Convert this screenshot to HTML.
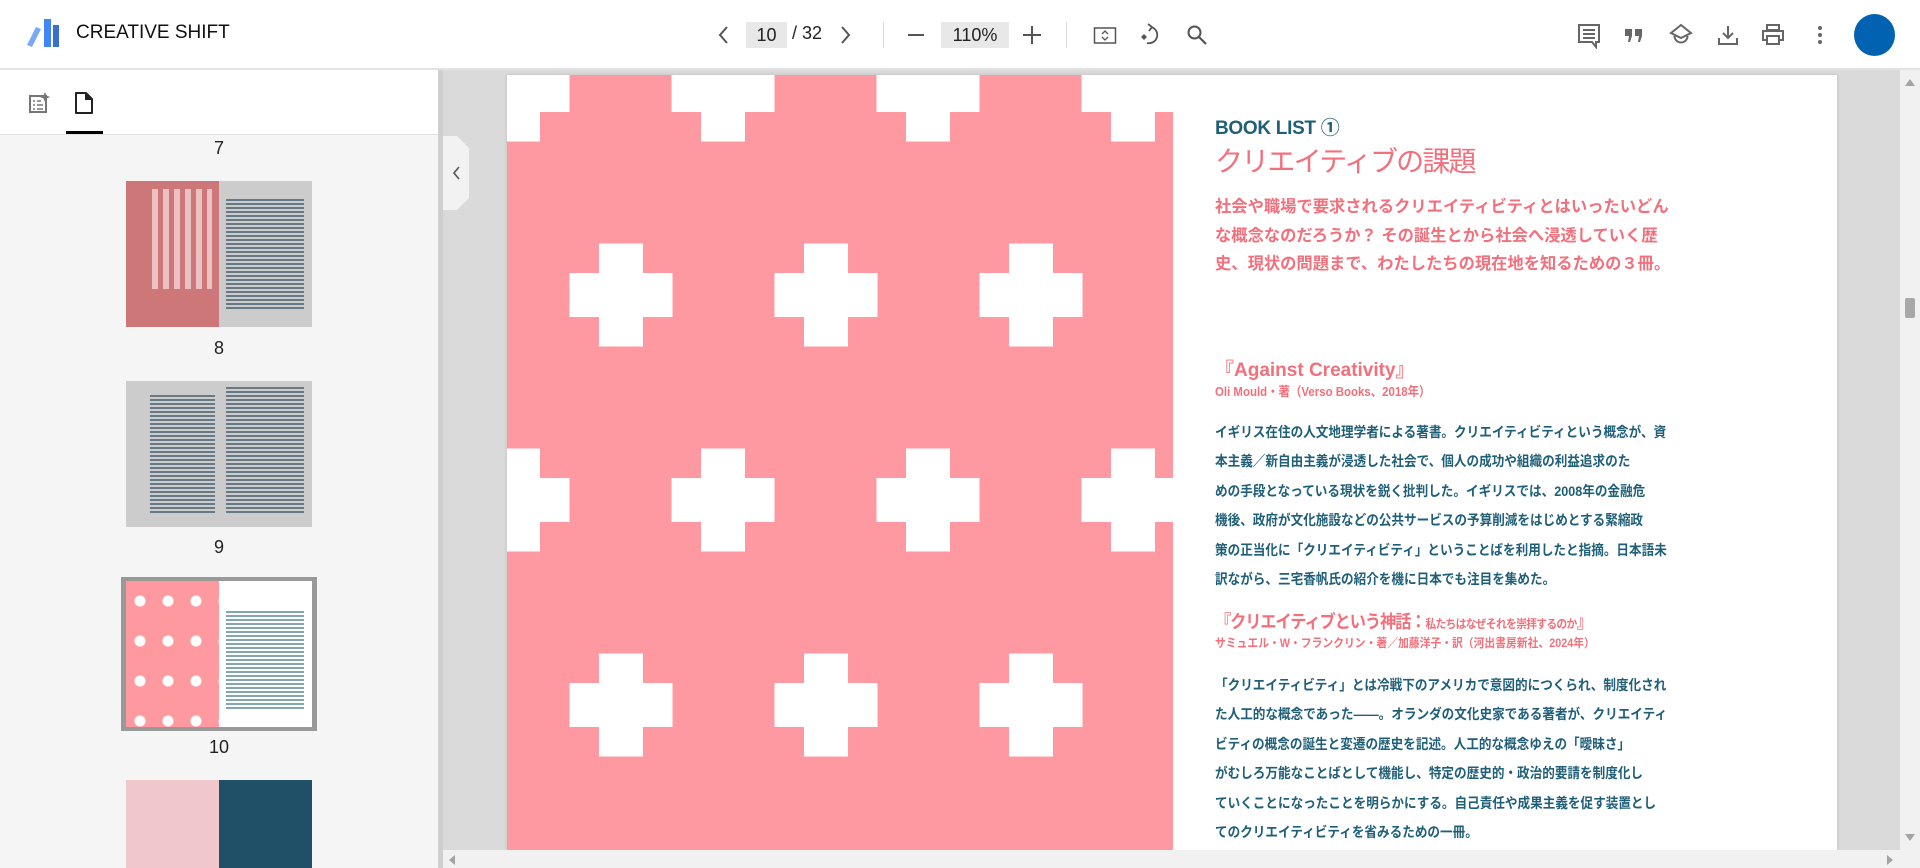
<!DOCTYPE html>
<html><head><meta charset="utf-8"><style>
*{margin:0;padding:0;box-sizing:border-box}
html{width:1920px;height:868px;overflow:hidden}
body{width:1920px;height:868px;overflow:hidden;background:#dadada;font-family:"Liberation Sans","Noto Sans CJK JP",sans-serif;position:relative}
.abs{position:absolute}
#top{left:0;top:0;width:1920px;height:70px;background:#fff;border-bottom:2px solid #e3e3e3;z-index:3}
.ic{position:absolute;top:23px}
#side{left:0;top:70px;width:438px;height:798px;background:#f5f5f5;overflow:hidden}
#tabs{left:0;top:0;width:438px;height:65px;background:#fff;border-bottom:1px solid #e2e2e2}
.num{position:absolute;width:438px;text-align:center;font-size:18px;color:#222}
.th{position:absolute;left:126px;width:186px;height:146px}
.pink{color:#f2707c}.teal{color:#1f5f78}
</style></head><body>
<div id="top" class="abs">
 <svg class="abs" style="left:24px;top:16px" width="40" height="36" viewBox="0 0 40 36"><path d="M3 29 L12 11 L17 13 L8 31Z" fill="#7aa7f7"/><rect x="20" y="3" width="7" height="28" fill="#4285f4"/><rect x="29" y="9" width="6" height="22" fill="#3a6fca"/></svg>
 <div class="abs" style="left:76px;top:22px;font-size:19px;color:#111">CREATIVE SHIFT</div>
 <svg class="ic" style="left:714px" width="20" height="24" viewBox="0 0 20 24"><path d="M13 4 L6 12 L13 20" stroke="#555" stroke-width="2" fill="none"/></svg>
 <div class="abs" style="left:746px;top:22px;width:41px;height:26px;background:#e8e8e8;font-size:18px;text-align:center;line-height:26px;color:#222">10</div>
 <div class="abs" style="left:792px;top:23px;font-size:18px;color:#222">/ 32</div>
 <svg class="ic" style="left:835px" width="20" height="24" viewBox="0 0 20 24"><path d="M7 4 L14 12 L7 20" stroke="#555" stroke-width="2" fill="none"/></svg>
 <div class="abs" style="left:883px;top:22px;width:1px;height:26px;background:#ddd"></div>
 <svg class="ic" style="left:906px" width="20" height="24"><path d="M2 12 H18" stroke="#555" stroke-width="2"/></svg>
 <div class="abs" style="left:941px;top:22px;width:68px;height:26px;background:#e8e8e8;font-size:18px;text-align:center;line-height:26px;color:#222">110%</div>
 <svg class="ic" style="left:1021px" width="22" height="24"><path d="M2 12 H20 M11 3 V21" stroke="#555" stroke-width="2"/></svg>
 <div class="abs" style="left:1066px;top:22px;width:1px;height:26px;background:#ddd"></div>
 <svg class="ic" style="left:1093px" width="24" height="24"><rect x="1.5" y="5" width="21" height="15" stroke="#555" stroke-width="1.5" fill="none"/><path d="M9 11 L12 8 L15 11 M9 14 L12 17 L15 14" stroke="#555" stroke-width="1.3" fill="none"/></svg>
 <svg class="ic" style="left:1139px" width="24" height="26"><path d="M12 4 A8 8 0 1 1 8 20" stroke="#555" stroke-width="1.8" fill="none"/><path d="M9 1 L13 4 L10 8" stroke="#555" stroke-width="1.8" fill="none"/><path d="M5 11 L8 14 L5 17 L2 14Z" fill="#555"/></svg>
 <svg class="ic" style="left:1185px" width="24" height="24"><circle cx="9.5" cy="9.5" r="6" stroke="#555" stroke-width="2" fill="none"/><path d="M14 14 L21 21" stroke="#555" stroke-width="2.2"/></svg>
 <svg class="ic" style="left:1577px" width="24" height="26"><path d="M2 2 H22 V19 H19 V24 L15 19 H2Z" stroke="#666" stroke-width="2" fill="none"/><path d="M6 7 H18 M6 11 H18 M6 15 H18" stroke="#666" stroke-width="2"/></svg>
 <svg class="ic" style="left:1622px" width="24" height="24"><path d="M3 6 H10 V13 L8 19 H6 L7 13 H3Z M13 6 H20 V13 L18 19 H16 L17 13 H13Z" fill="#666"/></svg>
 <svg class="ic" style="left:1669px" width="24" height="26"><path d="M12 2 L22 10 L12 15 L2 10Z" stroke="#666" stroke-width="2" fill="none"/><path d="M5.5 13 A6.5 6.5 0 1 0 18.5 13" stroke="#666" stroke-width="2" fill="none"/></svg>
 <svg class="ic" style="left:1716px" width="24" height="24"><path d="M12 3 V15 M7 10 L12 15 L17 10 M3 15 V21 H21 V15" stroke="#666" stroke-width="2" fill="none"/></svg>
 <svg class="ic" style="left:1761px" width="24" height="24"><rect x="6" y="2" width="12" height="5" stroke="#666" stroke-width="2" fill="none"/><path d="M6 17 H2 V8 H22 V17 H18" stroke="#666" stroke-width="2" fill="none"/><rect x="6" y="13" width="12" height="8" stroke="#666" stroke-width="2" fill="none"/></svg>
 <svg class="ic" style="left:1815px" width="10" height="24"><circle cx="5" cy="5" r="2" fill="#666"/><circle cx="5" cy="12" r="2" fill="#666"/><circle cx="5" cy="19" r="2" fill="#666"/></svg>
 <div class="abs" style="left:1854px;top:14px;width:41px;height:42px;border-radius:50%;background:#0062b0"></div>
</div>

<div id="side" class="abs">
 <div id="tabs" class="abs">
  <svg class="abs" style="left:28px;top:22px" width="22" height="22"><rect x="2" y="4" width="16" height="16" stroke="#777" stroke-width="2" fill="none"/><path d="M5 9 H7 M9 9 H13 M5 13 H7 M9 13 H15 M5 17 H7 M9 17 H15" stroke="#777" stroke-width="1.5"/><path d="M17 0 L18.5 3.5 L22 5 L18.5 6.5 L17 10 L15.5 6.5 L12 5 L15.5 3.5Z" fill="#777"/></svg>
  <svg class="abs" style="left:74px;top:21px" width="20" height="24"><path d="M2 2 H12 L18 8 V22 H2Z" stroke="#222" stroke-width="2" fill="none" stroke-linejoin="round"/><path d="M12 2 V8 H18" stroke="#222" stroke-width="2" fill="#222"/></svg>
  <div class="abs" style="left:66px;top:61px;width:37px;height:3px;background:#000"></div>
 </div>
 <div class="num" style="top:68px">7</div>
 <div class="th" style="top:111px;background:#ccc"><div class="abs" style="left:0;top:0;width:93px;height:146px;background:#cd7779"></div>
  <div class="abs" style="left:26px;top:8px;width:60px;height:100px;background:repeating-linear-gradient(90deg,#f1d5d5 0 6px,transparent 6px 11px);opacity:.8"></div>
  <div class="abs" style="left:100px;top:18px;width:78px;height:110px;background:repeating-linear-gradient(#3a5566 0 2px,transparent 2px 4px);opacity:.7"></div></div>
 <div class="num" style="top:268px">8</div>
 <div class="th" style="top:311px;background:#ccc">
  <div class="abs" style="left:24px;top:14px;width:65px;height:120px;background:repeating-linear-gradient(#3a5566 0 2px,transparent 2px 4px);opacity:.7"></div>
  <div class="abs" style="left:100px;top:6px;width:78px;height:128px;background:repeating-linear-gradient(#3a5566 0 2px,transparent 2px 4px);opacity:.7"></div></div>
 <div class="num" style="top:467px">9</div>
 <div class="abs" style="left:121px;top:507px;width:196px;height:154px;background:#999"></div>
 <div class="th" style="top:511px;background:#fff">
  <div class="abs" style="left:0;top:0;width:93px;height:146px;background:#ff99a0 radial-gradient(circle,#fff 0 5px,transparent 6px) 0 0/28px 40px"></div>
  <div class="abs" style="left:100px;top:30px;width:78px;height:100px;background:repeating-linear-gradient(#2e6a80 0 2px,transparent 2px 4px);opacity:.6"></div></div>
 <div class="num" style="top:667px">10</div>
 <div class="th" style="top:710px;height:88px;background:#f0c8cb"><div class="abs" style="left:93px;top:0;width:93px;height:88px;background:#1f5068"></div></div>
</div>

<div class="abs" style="left:438px;top:70px;width:5px;height:798px;background:#cfcfcf"></div>
<svg class="abs" style="left:443px;top:136px" width="26" height="74"><path d="M0 0 H14 L26 12 V62 L14 74 H0Z" fill="#f2f2f2"/><path d="M16 31 L11 37 L16 43" stroke="#555" stroke-width="1.6" fill="none"/></svg>

<div class="abs" style="left:507px;top:75px;width:1330px;height:775px;background:#fff;box-shadow:0 0 3px rgba(0,0,0,.15);overflow:hidden">
 <svg class="abs" style="left:0;top:0" width="666" height="775">
  <defs><g id="c"><rect x="-22" y="-51.5" width="44" height="103" fill="#fff"/><rect x="-51.5" y="-22" width="103" height="44" fill="#fff"/></g></defs>
  <rect width="666" height="775" fill="#ff99a1"/>
  <use href="#c" x="11" y="15"/><use href="#c" x="216" y="15"/><use href="#c" x="421" y="15"/><use href="#c" x="626" y="15"/>
  <use href="#c" x="114" y="220"/><use href="#c" x="319" y="220"/><use href="#c" x="524" y="220"/>
  <use href="#c" x="11" y="425"/><use href="#c" x="216" y="425"/><use href="#c" x="421" y="425"/><use href="#c" x="626" y="425"/>
  <use href="#c" x="114" y="630"/><use href="#c" x="319" y="630"/><use href="#c" x="524" y="630"/>
 </svg>
 <div class="abs" style="left:708px;top:0;width:600px;height:775px">
  <div class="abs teal" style="top:38px;font-size:19px;font-weight:bold;letter-spacing:-.3px">BOOK LIST ①</div>
  <div class="abs pink" style="top:65px;font-size:28px;letter-spacing:-1.8px">クリエイティブの課題</div>
  <div class="abs pink" style="top:118px;font-size:16.3px;font-weight:bold;line-height:28.5px;white-space:nowrap">社会や職場で要求されるクリエイティビティとはいったいどん<br>な概念なのだろうか？ その誕生とから社会へ浸透していく歴<br>史、現状の問題まで、わたしたちの現在地を知るための３冊。</div>
  <div class="abs pink" style="top:280px;font-size:19px;font-weight:bold">『Against Creativity』</div>
  <div class="abs pink" style="top:306px;font-size:13px;font-weight:bold;white-space:nowrap;transform:scaleX(.88);transform-origin:0 0">Oli Mould・著（Verso Books、2018年）</div>
  <div class="abs teal" style="top:343px;font-size:14px;font-weight:bold;line-height:29.4px;white-space:nowrap;transform:scaleX(.9);transform-origin:0 0">イギリス在住の人文地理学者による著書。クリエイティビティという概念が、資<br>本主義／新自由主義が浸透した社会で、個人の成功や組織の利益追求のた<br>めの手段となっている現状を鋭く批判した。イギリスでは、2008年の金融危<br>機後、政府が文化施設などの公共サービスの予算削減をはじめとする緊縮政<br>策の正当化に「クリエイティビティ」ということばを利用したと指摘。日本語未<br>訳ながら、三宅香帆氏の紹介を機に日本でも注目を集めた。</div>
  <div class="abs pink" style="top:533px;font-size:18px;font-weight:bold;white-space:nowrap;letter-spacing:-1.2px;transform:scaleX(.9);transform-origin:0 0">『クリエイティブという神話：<span style="font-size:12px;letter-spacing:-.8px">私たちはなぜそれを崇拝するのか</span>』</div>
  <div class="abs pink" style="top:559px;font-size:12px;font-weight:bold;white-space:nowrap;transform:scaleX(.9);transform-origin:0 0">サミュエル・W・フランクリン・著／加藤洋子・訳（河出書房新社、2024年）</div>
  <div class="abs teal" style="top:596px;font-size:14px;font-weight:bold;line-height:29.4px;white-space:nowrap;transform:scaleX(.9);transform-origin:0 0">「クリエイティビティ」とは冷戦下のアメリカで意図的につくられ、制度化され<br>た人工的な概念であった――。オランダの文化史家である著者が、クリエイティ<br>ビティの概念の誕生と変遷の歴史を記述。人工的な概念ゆえの「曖昧さ」<br>がむしろ万能なことばとして機能し、特定の歴史的・政治的要請を制度化し<br>ていくことになったことを明らかにする。自己責任や成果主義を促す装置とし<br>てのクリエイティビティを省みるための一冊。</div>
 </div>
</div>

<div class="abs" style="left:1900px;top:70px;width:20px;height:780px;background:#f1f1f1"></div>
<svg class="abs" style="left:1903px;top:76px" width="14" height="12"><path d="M2 10 L7 3 L12 10Z" fill="#a3a3a3"/></svg>
<div class="abs" style="left:1905px;top:298px;width:10px;height:20px;background:#a8a8a8;border-radius:2px"></div>
<svg class="abs" style="left:1903px;top:832px" width="14" height="12"><path d="M2 2 L7 9 L12 2Z" fill="#a3a3a3"/></svg>
<div class="abs" style="left:443px;top:850px;width:1477px;height:18px;background:#f1f1f1"></div>
<svg class="abs" style="left:446px;top:853px" width="12" height="14"><path d="M9 2 L3 7 L9 12Z" fill="#a3a3a3"/></svg>
<svg class="abs" style="left:1884px;top:853px" width="12" height="14"><path d="M3 2 L9 7 L3 12Z" fill="#a3a3a3"/></svg>
</body></html>
